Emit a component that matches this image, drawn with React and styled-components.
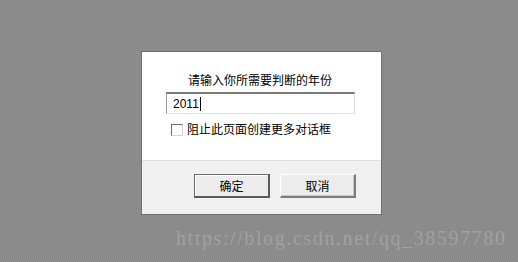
import React from "react";
import styled, { createGlobalStyle } from "styled-components";

const Global = createGlobalStyle`
  html, body { margin: 0; padding: 0; }
  body { font-family: "Liberation Sans", "Noto Sans CJK SC", sans-serif; }
`;

const Page = styled.div`
  position: relative;
  width: 518px;
  height: 262px;
  overflow: hidden;
  box-sizing: border-box;
  padding: 51px 0 0 141px;
  background-color: #8b8b8b;
  background-image: repeating-conic-gradient(#8f8f8f 0 25%, #878787 0 50%);
  background-size: 2px 2px;
`;

const Dialog = styled.div`
  width: 241px;
  height: 164px;
  box-sizing: border-box;
  border: 1px solid #707070;
  background: #ffffff;
  display: flex;
  flex-direction: column;
`;

const Body = styled.div`
  height: 108px;
  box-sizing: border-box;
  padding: 21px 0 0 24px;
  display: flex;
  flex-direction: column;
  align-items: flex-start;
`;

const Label = styled.div`
  width: 190px;
  text-align: center;
  font-size: 12px;
  line-height: 16px;
  color: #000;
  margin-left: -3px;
  padding-left: 2px;
`;

const Input = styled.div`
  margin-top: 3px;
  width: 189px;
  height: 22px;
  box-sizing: border-box;
  border-top: 2px solid #7a7a7a;
  border-left: 1px solid #9a9a9a;
  border-right: 1px solid #dcdcdc;
  border-bottom: 1px solid #e3e3e3;
  padding-left: 6px;
  display: flex;
  align-items: center;
  font-size: 12px;
  color: #000;
`;

const Caret = styled.span`
  display: inline-block;
  width: 1px;
  height: 14px;
  background: #000;
  margin-left: 1px;
`;

const CheckRow = styled.label`
  margin-top: 9px;
  margin-left: 5px;
  display: flex;
  align-items: center;
  gap: 4px;
  font-size: 12px;
  line-height: 14px;
  color: #000;
`;

const Box = styled.span`
  width: 12px;
  height: 12px;
  box-sizing: border-box;
  border-top: 1px solid #6e6e6e;
  border-left: 1px solid #6e6e6e;
  border-right: 1px solid #d4d4d4;
  border-bottom: 1px solid #d4d4d4;
  background: #fff;
`;

const Footer = styled.div`
  flex: 1;
  background: #f0f0f0;
  border-top: 1px solid #dfdfdf;
  display: flex;
  justify-content: flex-end;
  align-items: flex-start;
  gap: 10px;
  padding: 13px 25px 0 0;
`;

const Button = styled.button`
  width: 76px;
  height: 24px;
  box-sizing: border-box;
  margin: 0;
  padding: 0;
  font-family: "Liberation Sans", "Noto Sans CJK SC", sans-serif;
  font-size: 12px;
  color: #000;
  background: #ececec;
  border-style: solid;
  border-width: ${(p) => (p.$default ? "1px 2px 2px 1px" : "1px 2px 2px 1px")};
  border-color: ${(p) =>
    p.$default
      ? "#6a6a6a #5a5a5a #5a5a5a #6a6a6a"
      : "#ffffff #7d7d7d #7d7d7d #ffffff"};
  box-shadow: ${(p) =>
    p.$default ? "inset 1px 1px 0 #ffffff" : "inset -1px -1px 0 #c8c8c8"};
`;

const Watermark = styled.div`
  position: absolute;
  left: 176px;
  top: 227px;
  font-family: "Liberation Serif", serif;
  font-size: 20px;
  letter-spacing: 1.6px;
  color: rgba(190, 190, 190, 0.45);
  white-space: nowrap;
`;

export default function App() {
  return (
    <>
      <Global />
      <Page>
        <Dialog>
          <Body>
            <Label>请输入你所需要判断的年份</Label>
            <Input>
              2011
              <Caret />
            </Input>
            <CheckRow>
              <Box />
              阻止此页面创建更多对话框
            </CheckRow>
          </Body>
          <Footer>
            <Button $default>确定</Button>
            <Button>取消</Button>
          </Footer>
        </Dialog>
        <Watermark>https://blog.csdn.net/qq_38597780</Watermark>
      </Page>
    </>
  );
}
